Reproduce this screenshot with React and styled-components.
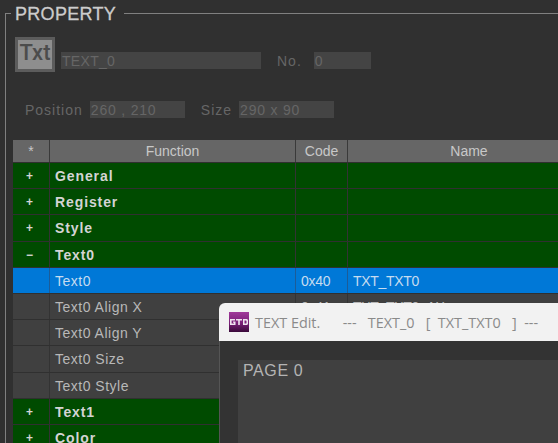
import React from "react";
import styled, { createGlobalStyle } from "styled-components";

const Global = createGlobalStyle`
  html, body { margin: 0; padding: 0; background: #303030; }
  #root { width: 558px; height: 443px; overflow: hidden; }
`;

const Page = styled.div`
  position: relative;
  width: 558px;
  height: 443px;
  overflow: hidden;
  background: #303030;
  font-family: "Liberation Sans", Arial, sans-serif;
  padding: 13px 0 0 5px;
  box-sizing: border-box;
`;

const Group = styled.section`
  border-left: 1px solid #808080;
  height: 500px;
`;

const Legend = styled.div`
  display: flex;
  align-items: center;
  height: 1px;
`;

const Tick = styled.span`
  width: 5px;
  height: 1px;
  background: #808080;
`;

const LegendText = styled.span`
  margin: 0 8px 0 4px;
  font-size: 18px;
  line-height: 20px;
  letter-spacing: 0.3px;
  color: #cccccc;
  -webkit-text-stroke: 0.3px #cccccc;
`;

const LegendLine = styled.span`
  flex: 1;
  height: 1px;
  background: #808080;
`;

const IdentityRow = styled.div`
  display: flex;
  align-items: flex-end;
  margin: 23px 0 0 9px;
`;

const IdentityFields = styled.div`
  display: flex;
  margin: 0 0 3px 6px;
`;

const TypeIcon = styled.div`
  box-sizing: border-box;
  width: 40px;
  height: 35px;
  border: 3px solid #5c5c5c;
  background: #8e8e8e;
  color: #4c4c4c;
  font: 500 22px/26px Roboto, sans-serif;
  text-align: center;
`;

const Field = styled.div`
  box-sizing: border-box;
  width: ${(p) => p.$w}px;
  height: 17px;
  padding-left: 1px;
  background: #444444;
  color: #666666;
  font-size: 14px;
  line-height: 18px;
  letter-spacing: ${(p) => p.$ls || "0.3px"};
  white-space: nowrap;
  overflow: hidden;
`;

const Label = styled.span`
  color: #666666;
  font-size: 14px;
  line-height: 19px;
  height: 17px;
  letter-spacing: 1px;
  margin: ${(p) => p.$m};
`;

const PlaceRow = styled.div`
  display: flex;
  margin: 29px 0 0 19px;
`;

const Table = styled.div`
  margin: 22px 0 0 7px;
  width: 578px;
`;

const Row = styled.div`
  display: grid;
  grid-template-columns: 37px 246px 52px 1fr;
  height: ${(p) => (p.$head ? 22 : 25.2)}px;
  margin-bottom: 1px;
  background: ${(p) => p.$bg};
  & > * { border-right: 1px solid ${(p) => p.$line}; }
`;

const Cell = styled.div`
  color: ${(p) => p.$color || "#b8b8b8"};
  font-size: 14px;
  font-weight: ${(p) => (p.$bold ? 700 : 400)};
  line-height: ${(p) => (p.$head ? 22 : 27)}px;
  letter-spacing: ${(p) => (p.$head ? "0" : p.$bold ? "0.9px" : p.$tight ? "-0.3px" : "0.5px")};
  padding-left: ${(p) => (p.$pad ? 5 : 0)}px;
  text-align: ${(p) => (p.$center ? "center" : "left")};
  white-space: nowrap;
  overflow: hidden;
`;

const Mark = styled(Cell)`
  font-size: 12px;
  text-align: center;
  padding-right: 2px;
`;

const Window = styled.div`
  position: absolute;
  left: 219px;
  top: 303px;
  width: 345px;
  height: 160px;
`;

const TitleBar = styled.div`
  display: flex;
  align-items: center;
  height: 38px;
  padding-left: 10px;
  background: #f2f2f2;
  border-top-left-radius: 6px;
  color: #8a8a8a;
  font-family: "Open Sans", sans-serif;
  font-size: 14.4px;
  white-space: pre;
`;

const Logo = styled.svg`
  width: 20px;
  height: 20px;
  margin-right: 6px;
  flex: none;
`;

const WindowBody = styled.div`
  height: 122px;
  padding: 19px 0 0 18px;
  background: #333333;
  border-left: 1px solid #555555;
`;

const EditArea = styled.div`
  height: 120px;
  background: #404040;
  color: #b4b4b4;
  font-size: 16px;
  line-height: 21px;
  letter-spacing: 0.6px;
  padding-left: 5px;
`;

const GROUP = { bg: "#004b00", line: "#333333", color: "#d4d4d4" };

const rows = [
  ["+", "General"],
  ["+", "Register"],
  ["+", "Style"],
  ["\u2212", "Text0"],
];
const subRows = [
  ["Text0 Align X", "0x41", "TXT_TXT0_AX"],
  ["Text0 Align Y", "", ""],
  ["Text0 Size", "", ""],
  ["Text0 Style", "", ""],
];

function GroupRow({ mark, title }) {
  return (
    <Row $bg={GROUP.bg} $line={GROUP.line}>
      <Mark $bold $color={GROUP.color}>{mark}</Mark>
      <Cell $pad $bold $color={GROUP.color}>{title}</Cell>
      <Cell />
      <Cell />
    </Row>
  );
}

export default function App() {
  return (
    <Page>
      <Global />
      <Group>
        <Legend>
          <Tick />
          <LegendText>PROPERTY</LegendText>
          <LegendLine />
        </Legend>
        <IdentityRow>
          <TypeIcon>Txt</TypeIcon>
          <IdentityFields>
            <Field $w={200}>TEXT_0</Field>
            <Label $m="0 12px 0 16px">No.</Label>
            <Field $w={57}>0</Field>
          </IdentityFields>
        </IdentityRow>
        <PlaceRow>
          <Label $m="0 7px 0 0">Position</Label>
          <Field $w={95} $ls="0.8px">260 , 210</Field>
          <Label $m="0 7px 0 16px">Size</Label>
          <Field $w={95} $ls="0.8px">290 x 90</Field>
        </PlaceRow>
        <Table>
          <Row $head $bg="#666666" $line="#3a3a3a">
            <Cell $head $center $color="#c8c8c8">*</Cell>
            <Cell $head $center $color="#c8c8c8">Function</Cell>
            <Cell $head $center $color="#c8c8c8">Code</Cell>
            <Cell $head $center $color="#c8c8c8">Name</Cell>
          </Row>
          {rows.map(([m, t]) => <GroupRow key={t} mark={m} title={t} />)}
          <Row $bg="#0078d7" $line="#1c5c98">
            <Cell />
            <Cell $pad $color="#c6dcf0">Text0</Cell>
            <Cell $pad $tight $color="#c6dcf0">0x40</Cell>
            <Cell $pad $tight $color="#c6dcf0">TXT_TXT0</Cell>
          </Row>
          {subRows.map(([f, c, n]) => (
            <Row key={f} $bg="#404040" $line="#333333">
              <Cell />
              <Cell $pad>{f}</Cell>
              <Cell $pad $tight>{c}</Cell>
              <Cell $pad $tight>{n}</Cell>
            </Row>
          ))}
          <GroupRow mark="+" title="Text1" />
          <GroupRow mark="+" title="Color" />
        </Table>
      </Group>
      <Window>
        <TitleBar>
          <Logo viewBox="0 0 20 20" aria-hidden="true">
            <defs>
              <linearGradient id="gtd" x1="0" y1="0" x2="0" y2="1">
                <stop offset="0" stopColor="#a03a9a" />
                <stop offset="0.55" stopColor="#7a1f78" />
                <stop offset="1" stopColor="#3a0a3a" />
              </linearGradient>
            </defs>
            <rect width="20" height="20" fill="url(#gtd)" />
            <path d="M1 7h5v1.4H2.6v3.200H5V10.800H4V9.600h2.500V13H1zM7 7h6v1.500h-2.200V13H9.200V8.500H7zM14 7h3.500c.9 0 1.500.7 1.500 1.500v3c0 .8-.6 1.500-1.500 1.500H14zm1.500 1.400v3.200h1.300c.4 0 .7-.3.7-.7V9.100c0-.4-.3-.7-.7-.7z" fill="#f0e4f0" />
          </Logo>
          {"TEXT Edit.      ---   TEXT_0   [  TXT_TXT0   ]  ---"}
        </TitleBar>
        <WindowBody>
          <EditArea>PAGE 0</EditArea>
        </WindowBody>
      </Window>
    </Page>
  );
}
